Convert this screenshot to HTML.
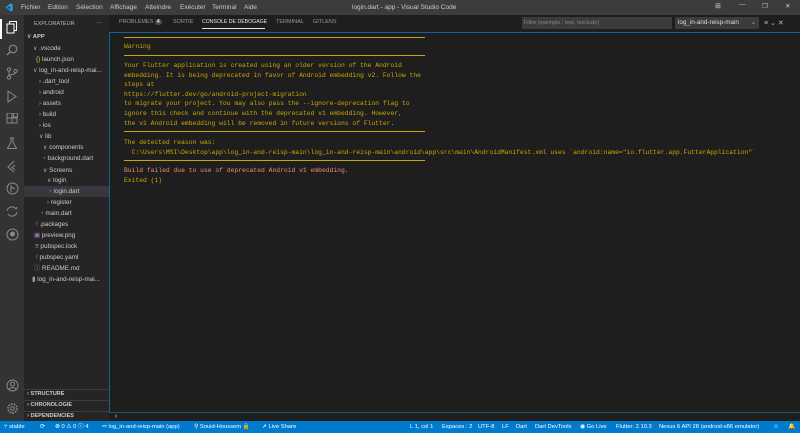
<!DOCTYPE html>
<html><head><meta charset="utf-8"><style>
*{margin:0;padding:0;box-sizing:border-box}
body{width:800px;height:433px;overflow:hidden;background:#1e1e1e;font-family:"Liberation Sans",sans-serif;position:relative;color:#ccc}
.abs{position:absolute}
#title{left:0;top:0;width:800px;height:15px;background:#3c3c3c;font-size:6.5px;color:#ccc}
#title span{position:absolute;top:3.5px}
#act{left:0;top:15px;width:24px;height:406px;background:#333}
#side{left:24px;top:15px;width:85px;height:406px;background:#252526;font-size:6.3px}
.it{position:absolute;height:11px;line-height:11px;white-space:nowrap;color:#ccc}
.chev{color:#aaa;font-size:6px}
#panel{left:110px;top:15px;width:690px;height:406px;background:#1e1e1e}
.tab{position:absolute;top:19px;font-size:5.5px;color:#999;white-space:nowrap}
.mono{font-family:"Liberation Mono",monospace;font-size:6.35px;white-space:pre;position:absolute;left:124px;color:#cca700}
.rule{position:absolute;left:124px;width:301px;height:1px;background:#cca700}
#status{left:0;top:421px;width:800px;height:12px;background:#007acc;color:#fff;font-size:5.8px}
#status span{position:absolute;top:3px;white-space:nowrap;line-height:7px;height:7px;overflow:visible}
svg{position:absolute}
</style></head><body>
<div id="title" class="abs">
<svg style="left:4px;top:3px" width="9" height="9" viewBox="0 0 10 10"><path d="M7 0.5L9.5 1.5V8.5L7 9.5L2 5L7 0.5Z M7 3L4 5L7 7Z" fill="#23a9f2"/><path d="M0.5 3.5L1.5 3L7 7.5V9.5Z" fill="#007acc"/></svg>
<span style="left:21px">Fichier</span><span style="left:48px">Edition</span><span style="left:76px">Sélection</span><span style="left:110px">Affichage</span><span style="left:145px">Atteindre</span><span style="left:180px">Exécuter</span><span style="left:212px">Terminal</span><span style="left:244px">Aide</span>
<span style="left:352px">login.dart - app - Visual Studio Code</span>
<span style="left:715px;font-size:7px;top:2px">⊞</span><span style="left:739px;top:1px">—</span><span style="left:762px;top:2px">❐</span><span style="left:785px;top:2px">✕</span>
</div>
<div id="act" class="abs">
<div class="abs" style="left:0;top:4px;width:1.5px;height:20px;background:#fff"></div>
<svg style="left:6px;top:6px" width="12" height="13" viewBox="0 0 12 13"><rect x="3.5" y="0.5" width="7" height="9" fill="none" stroke="#fff"/><rect x="1" y="3" width="7" height="9" fill="#333" stroke="#fff"/></svg>
<svg style="left:6px;top:29px" width="12" height="12"><circle cx="7" cy="5" r="3.8" fill="none" stroke="#888" stroke-width="1.1"/><path d="M4.3 7.7L1 11" stroke="#888" stroke-width="1.3"/></svg>
<svg style="left:6px;top:52px" width="12" height="13"><circle cx="3" cy="2.5" r="1.6" fill="none" stroke="#888"/><circle cx="3" cy="10.5" r="1.6" fill="none" stroke="#888"/><circle cx="9.5" cy="4" r="1.6" fill="none" stroke="#888"/><path d="M3 4V9M9.5 5.6C9.5 8 3 7 3 9" fill="none" stroke="#888"/></svg>
<svg style="left:6px;top:75px" width="12" height="13"><path d="M2 1L10 6.5L2 12Z" fill="none" stroke="#888"/></svg>
<svg style="left:6px;top:98px" width="13" height="13"><rect x="1" y="5" width="5" height="5" fill="none" stroke="#888"/><rect x="6" y="5" width="5" height="5" fill="none" stroke="#888"/><rect x="1" y="0" width="5" height="5" fill="none" stroke="#888"/><rect x="7.5" y="0" width="4" height="4" fill="none" stroke="#888"/></svg>
<svg style="left:6px;top:122px" width="12" height="13"><path d="M4 1H8M5 1V5L1.5 11.5H10.5L7 5V1" fill="none" stroke="#888"/></svg>
<svg style="left:6px;top:145px" width="12" height="13"><path d="M8 1L2 7L8 12M9 5L6 7.5L9 10" fill="none" stroke="#888"/></svg>
<svg style="left:6px;top:167px" width="13" height="13"><circle cx="6.5" cy="6.5" r="5.5" fill="none" stroke="#888"/><path d="M5 3V10M5 5L9 7" stroke="#888" fill="none"/></svg>
<svg style="left:6px;top:190px" width="13" height="13"><path d="M1 6A5 5 0 0 1 10 4L11 2M11 7A5 5 0 0 1 2 9" fill="none" stroke="#888"/></svg>
<svg style="left:6px;top:213px" width="13" height="13"><circle cx="6.5" cy="6.5" r="5.5" fill="none" stroke="#888"/><circle cx="6.5" cy="6" r="2.5" fill="#888"/></svg>
<svg style="left:6px;top:364px" width="13" height="13"><circle cx="6.5" cy="6.5" r="5.5" fill="none" stroke="#888"/><circle cx="6.5" cy="5" r="2" fill="none" stroke="#888"/><path d="M3 10.5C4 8 9 8 10 10.5" fill="none" stroke="#888"/></svg>
<svg style="left:6px;top:387px" width="13" height="13"><circle cx="6.5" cy="6.5" r="4.5" fill="none" stroke="#888" stroke-width="1.8" stroke-dasharray="1.6 1.2"/><circle cx="6.5" cy="6.5" r="1.8" fill="none" stroke="#888"/></svg>
</div>
<div id="side" class="abs">
<div class="it" style="left:10px;top:4px;font-size:5.5px;color:#bbb">EXPLORATEUR</div><div class="it" style="left:72px;top:2px">···</div>
<div class="it" style="left:3px;top:17px;font-weight:bold;font-size:5.8px"><span class="chev">∨</span> APP</div>
<div class="it" style="left:9px;top:28px"><span class="chev">∨</span> .vscode</div>
<div class="it" style="left:12px;top:39px"><span style="color:#cbcb41">{}</span> launch.json</div>
<div class="it" style="left:9px;top:50px"><span class="chev">∨</span> log_in-and-reisp-mai...</div>
<div class="it" style="left:15px;top:61px"><span class="chev">›</span> .dart_tool</div>
<div class="it" style="left:15px;top:72px"><span class="chev">›</span> android</div>
<div class="it" style="left:15px;top:83px"><span class="chev">›</span> assets</div>
<div class="it" style="left:15px;top:94px"><span class="chev">›</span> build</div>
<div class="it" style="left:15px;top:105px"><span class="chev">›</span> ios</div>
<div class="it" style="left:15px;top:116px"><span class="chev">∨</span> lib</div>
<div class="it" style="left:19px;top:127px"><span class="chev">∨</span> components</div>
<div class="it" style="left:18px;top:138px"><span style="color:#41a6d9">◔</span> background.dart</div>
<div class="it" style="left:19px;top:150px"><span class="chev">∨</span> Screens</div>
<div class="it" style="left:23px;top:160px"><span class="chev">∨</span> login</div>
<div class="abs" style="left:0;top:171px;width:85px;height:11px;background:#37373d"></div>
<div class="it" style="left:24px;top:171px"><span style="color:#41a6d9">◔</span> login.dart</div>
<div class="it" style="left:23px;top:182px"><span class="chev">›</span> register</div>
<div class="it" style="left:16px;top:193px"><span style="color:#41a6d9">◔</span> main.dart</div>
<div class="it" style="left:12px;top:204px"><span style="color:#a074c4">!</span> .packages</div>
<div class="it" style="left:10px;top:215px"><span style="color:#a074c4">▣</span> preview.png</div>
<div class="it" style="left:11px;top:226px"><span style="color:#aaa">≡</span> pubspec.lock</div>
<div class="it" style="left:12px;top:237px"><span style="color:#a074c4">!</span> pubspec.yaml</div>
<div class="it" style="left:10px;top:248px"><span style="color:#519aba">ⓘ</span> README.md</div>
<div class="it" style="left:8px;top:259px"><span style="color:#8aa">▮</span> log_in-and-reisp-mai...</div>
<div class="abs" style="left:0;top:374px;width:85px;height:1px;background:#3c3c3c"></div>
<div class="it" style="left:3px;top:374px;font-weight:bold;font-size:5.5px"><span class="chev">›</span> STRUCTURE</div>
<div class="abs" style="left:0;top:385px;width:85px;height:1px;background:#3c3c3c"></div>
<div class="it" style="left:3px;top:385px;font-weight:bold;font-size:5.5px"><span class="chev">›</span> CHRONOLOGIE</div>
<div class="abs" style="left:0;top:396px;width:85px;height:1px;background:#3c3c3c"></div>
<div class="it" style="left:3px;top:396px;font-weight:bold;font-size:5.5px"><span class="chev">›</span> DEPENDENCIES</div>
</div>
<div class="tab" style="left:119px">PROBLÈMES <span style="display:inline-block;background:#4d4d4d;color:#fff;border-radius:4px;padding:0 2px">4</span></div>
<div class="tab" style="left:173px">SORTIE</div>
<div class="tab" style="left:202px;color:#e7e7e7;font-size:5.2px">CONSOLE DE DÉBOGAGE</div>
<div class="abs" style="left:202px;top:28px;width:63px;height:1px;background:#e7e7e7"></div>
<div class="tab" style="left:276px">TERMINAL</div>
<div class="tab" style="left:313px">GITLENS</div>
<div class="abs" style="left:522px;top:17px;width:150px;height:12px;background:#3c3c3c;font-size:5.5px;color:#888;padding:3px 2px">Filtre (exemple : text, !exclude)</div>
<div class="abs" style="left:675px;top:17px;width:84px;height:12px;background:#3c3c3c;font-size:6.3px;color:#ddd;padding:2px 3px">log_in-and-reisp-main <span style="float:right;color:#aaa">⌄</span></div>
<div class="abs" style="left:764px;top:19px;font-size:7px;color:#bbb">≡ ⌄ ✕</div>
<div class="abs" style="left:110px;top:32px;width:690px;height:1px;background:#0e639c"></div>
<div class="abs" style="left:109px;top:32px;width:1px;height:381px;background:#0e639c"></div>
<div class="abs" style="left:110px;top:412px;width:690px;height:1px;background:#2b4f63"></div>
<div class="rule" style="top:37px"></div>
<div class="mono" style="top:43px">Warning</div>
<div class="rule" style="top:55px"></div>
<div class="mono" style="top:61px;line-height:9.6px">Your Flutter application is created using an older version of the Android
embedding. It is being deprecated in favor of Android embedding v2. Follow the
steps at
https://flutter.dev/go/android-project-migration
to migrate your project. You may also pass the --ignore-deprecation flag to
ignore this check and continue with the deprecated v1 embedding. However,
the v1 Android embedding will be removed in future versions of Flutter.</div>
<div class="rule" style="top:131px"></div>
<div class="mono" style="top:138px;line-height:9.6px">The detected reason was:
  C:\Users\MSI\Desktop\app\log_in-and-reisp-main\log_in-and-reisp-main\android\app\src\main\AndroidManifest.xml uses `android:name="io.flutter.app.FutterApplication"`</div>
<div class="rule" style="top:160px"></div>
<div class="mono" style="top:167px;color:#f48771">Build failed due to use of deprecated Android v1 embedding.</div>
<div class="mono" style="top:177px">Exited (1)</div>
<div class="abs" style="left:115px;top:413px;font-size:7px;color:#ccc">›</div>
<div id="status" class="abs">
<span style="left:4px">⑂ stable</span><span style="left:40px">⟳</span><span style="left:55px">⊗ 0 ⚠ 0 ⓘ 4</span><span style="left:102px">⇨ log_in-and-reisp-main (app)</span><span style="left:194px">⚲ Souid-Houssem 🔒</span><span style="left:262px">➚ Live Share</span>
<span style="left:410px">L 1, col 1</span><span style="left:442px">Espaces : 2</span><span style="left:478px">UTF-8</span><span style="left:502px">LF</span><span style="left:516px">Dart</span><span style="left:535px">Dart DevTools</span><span style="left:580px">◉ Go Live</span><span style="left:616px">Flutter: 2.10.3</span><span style="left:659px">Nexus 6 API 28 (android-x86 emulator)</span><span style="left:773px">☺</span><span style="left:788px">🔔</span>
</div>
</body></html>
